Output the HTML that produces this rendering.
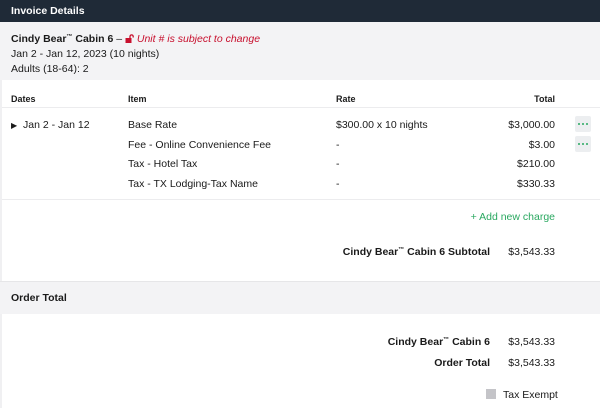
<!DOCTYPE html><html><head><style>
body{margin:0;width:600px;height:408px;overflow:hidden;background:#fff;font-family:"Liberation Sans",sans-serif;color:#1a1a1a;position:relative}
div,span{position:absolute;white-space:nowrap}
.t{font-size:10.5px}.b{font-weight:bold}
.r{text-align:right}
sup{font-size:6px;vertical-align:4px}
.dots{width:16px;height:16px;background:#eceef0;border-radius:2px;display:flex;align-items:center;justify-content:center;gap:1.5px}
.dots i{width:2.5px;height:2.5px;background:#2aa860;border-radius:50%;display:block}
</style></head><body>
<div style="left:0;top:0;width:600px;height:22px;background:#1f2a37"></div>
<div class="t b" style="left:11px;top:5px;color:#fff;font-size:10.5px">Invoice Details</div>
<div style="left:0;top:22px;width:600px;height:58px;background:#f3f3f5"></div>
<div class="t" style="left:11px;top:33px"><b>Cindy Bear<sup>™</sup> Cabin 6</b> – <span style="position:static;color:#c8102e;font-style:italic"><svg width="9" height="9" viewBox="0 0 9 9" style="vertical-align:-1px"><rect x="0.5" y="4" width="6" height="5" fill="#c8102e"/><path d="M5 4V2.5a1.6 1.6 0 0 1 3.2 0V3.5" stroke="#c8102e" stroke-width="1.3" fill="none"/></svg> Unit # is subject to change</span></div>
<div class="t" style="left:11px;top:48px">Jan 2 - Jan 12, 2023 (10 nights)</div>
<div class="t" style="left:11px;top:63px">Adults (18-64): 2</div>
<div style="left:0;top:80px;width:2px;height:328px;background:#f0f0f2"></div>
<div class="b" style="left:11px;top:94px;font-size:9px">Dates</div>
<div class="b" style="left:128px;top:94px;font-size:9px">Item</div>
<div class="b" style="left:336px;top:94px;font-size:9px">Rate</div>
<div class="b r" style="left:455px;width:100px;top:94px;font-size:9px">Total</div>
<div style="left:2px;top:107px;width:598px;height:1px;background:#ececee"></div>
<div class="t" style="left:11px;top:119px"><span style="position:static;font-size:8px">▶</span>&nbsp; Jan 2 - Jan 12</div>
<div class="t" style="left:128px;top:119px">Base Rate</div>
<div class="t" style="left:128px;top:139px">Fee - Online Convenience Fee</div>
<div class="t" style="left:128px;top:158px">Tax - Hotel Tax</div>
<div class="t" style="left:128px;top:178px">Tax - TX Lodging-Tax Name</div>
<div class="t" style="left:336px;top:119px">$300.00 x 10 nights</div>
<div class="t" style="left:336px;top:139px">-</div>
<div class="t" style="left:336px;top:158px">-</div>
<div class="t" style="left:336px;top:178px">-</div>
<div class="t r" style="left:455px;width:100px;top:119px">$3,000.00</div>
<div class="t r" style="left:455px;width:100px;top:139px">$3.00</div>
<div class="t r" style="left:455px;width:100px;top:158px">$210.00</div>
<div class="t r" style="left:455px;width:100px;top:178px">$330.33</div>
<div class="dots" style="left:575px;top:116px"><i></i><i></i><i></i></div>
<div class="dots" style="left:575px;top:136px"><i></i><i></i><i></i></div>
<div style="left:2px;top:199px;width:598px;height:1px;background:#ececee"></div>
<div class="t r" style="left:400px;width:155px;top:211px;color:#2aa860">+ Add new charge</div>
<div class="t b r" style="left:300px;width:190px;top:246px">Cindy Bear<sup>™</sup> Cabin 6 Subtotal</div>
<div class="t r" style="left:455px;width:100px;top:246px">$3,543.33</div>
<div style="left:0;top:281px;width:600px;height:32px;background:#f3f3f5;border-top:1px solid #e6e6e8"></div>
<div class="t b" style="left:11px;top:292px">Order Total</div>
<div class="t b r" style="left:300px;width:190px;top:336px">Cindy Bear<sup>™</sup> Cabin 6</div>
<div class="t r" style="left:455px;width:100px;top:336px">$3,543.33</div>
<div class="t b r" style="left:300px;width:190px;top:357px">Order Total</div>
<div class="t r" style="left:455px;width:100px;top:357px">$3,543.33</div>
<div style="left:486px;top:389px;width:10px;height:10px;background:#c4c4c8"></div>
<div class="t" style="left:503px;top:389px">Tax Exempt</div>
</body></html>
